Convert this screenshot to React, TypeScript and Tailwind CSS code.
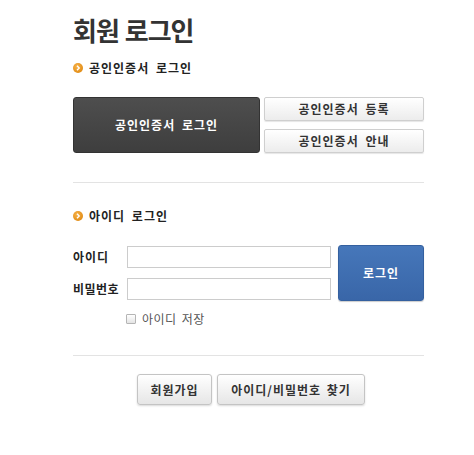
import React from "react";

const font = { fontFamily: '"Noto Sans CJK KR", "Noto Sans", sans-serif' };

function Bullet() {
  return (
    <svg width="10" height="10" viewBox="0 0 10 10" className="shrink-0">
      <defs>
        <radialGradient id="bg" cx="40%" cy="35%" r="70%">
          <stop offset="0%" stopColor="#f7b24a" />
          <stop offset="100%" stopColor="#e08a12" />
        </radialGradient>
      </defs>
      <circle cx="5" cy="5" r="5" fill="url(#bg)" />
      <path d="M4 2.8 L6.2 5 L4 7.2" fill="none" stroke="#fff" strokeWidth="1.4" />
    </svg>
  );
}

function SectionHead({ text }: { text: string }) {
  return (
    <div className="flex items-center gap-[6px] h-[16px]">
      <Bullet />
      <span className="text-[12px] leading-[16px] font-bold text-[#222] tracking-[1px] [word-spacing:3px]">{text}</span>
    </div>
  );
}

export default function App() {
  return (
    <div className="w-[474px] h-[455px] bg-white" style={font}>
      <div className="w-[351px] ml-[73px] pt-[13px]">
        <h1 className="text-[26px] leading-[34px] font-bold text-[#333] tracking-[-1px] [word-spacing:1px]">회원 로그인</h1>

        <div className="mt-[13px]">
          <SectionHead text="공인인증서 로그인" />
        </div>

        <div className="mt-[21px] flex gap-[4px]">
          <button className="w-[187px] h-[56px] rounded-[3px] bg-gradient-to-b from-[#4e4e4e] to-[#3e3e3e] border border-[#333] text-white text-[12px] font-bold tracking-[1px] [word-spacing:3px]">
            공인인증서 로그인
          </button>
          <div className="flex flex-col gap-[8px] w-[160px]">
            <button className="h-[24px] rounded-[2px] border border-[#cfcfcf] bg-gradient-to-b from-white to-[#ececec] text-[12px] font-bold text-[#333] tracking-[1px] [word-spacing:3px] shadow-[0_1px_1px_rgba(0,0,0,0.1)]">
              공인인증서 등록
            </button>
            <button className="h-[24px] rounded-[2px] border border-[#cfcfcf] bg-gradient-to-b from-white to-[#ececec] text-[12px] font-bold text-[#333] tracking-[1px] [word-spacing:3px] shadow-[0_1px_1px_rgba(0,0,0,0.1)]">
              공인인증서 안내
            </button>
          </div>
        </div>

        <div className="mt-[29px] h-px bg-[#e3e3e3]" />

        <div className="mt-[25px]">
          <SectionHead text="아이디 로그인" />
        </div>

        <div className="mt-[21px] flex gap-[7px]">
          <div className="flex flex-col gap-[10px] pt-[1px]">
            <div className="flex items-center h-[22px]">
              <span className="w-[54px] text-[12px] font-bold text-[#222] tracking-[1px]">아이디</span>
              <input className="w-[204px] h-[22px] border border-[#cccccc] bg-white outline-none" />
            </div>
            <div className="flex items-center h-[22px]">
              <span className="w-[54px] text-[12px] font-bold text-[#222] tracking-[0.5px]">비밀번호</span>
              <input type="password" className="w-[204px] h-[22px] border border-[#cccccc] bg-white outline-none" />
            </div>
          </div>
          <button className="w-[86px] h-[56px] rounded-[3px] bg-gradient-to-b from-[#4677ba] to-[#3966a8] border border-[#34609f] text-white text-[12px] font-bold tracking-[1px] shadow-[0_1px_1px_rgba(0,0,0,0.2)]">
            로그인
          </button>
        </div>

        <div className="mt-[13px] ml-[53px] flex items-center gap-[6px] h-[10px]">
          <span className="w-[10px] h-[10px] border border-[#b5b5b5] rounded-[1px] bg-gradient-to-b from-white to-[#e4e4e4]" />
          <span className="text-[12px] leading-[16px] text-[#555] tracking-[0.5px] [word-spacing:2px]">아이디 저장</span>
        </div>

        <div className="mt-[31px] h-px bg-[#e3e3e3]" />

        <div className="mt-[18px] flex justify-center gap-[5px] pl-[5px]">
          <button className="w-[75px] h-[31px] rounded-[3px] border border-[#c4c4c4] bg-gradient-to-b from-white to-[#e6e6e6] text-[12px] font-bold text-[#333] tracking-[1px] shadow-[0_1px_2px_rgba(0,0,0,0.15)]">
            회원가입
          </button>
          <button className="w-[148px] h-[31px] rounded-[3px] border border-[#c4c4c4] bg-gradient-to-b from-white to-[#e6e6e6] text-[12px] font-bold text-[#333] tracking-[1px] [word-spacing:2px] shadow-[0_1px_2px_rgba(0,0,0,0.15)]">
            아이디/비밀번호 찾기
          </button>
        </div>
      </div>
    </div>
  );
}
